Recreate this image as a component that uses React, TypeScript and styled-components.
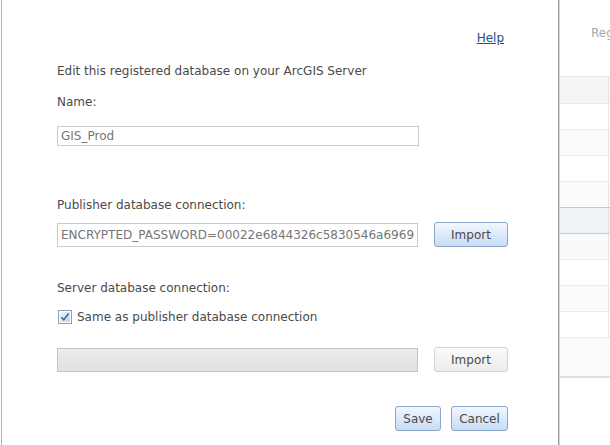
import React from 'react'
import styled, { createGlobalStyle } from 'styled-components'

const GlobalStyle = createGlobalStyle`
    html, body {
        margin: 0;
        padding: 0;
        background: #fff;
        font-family: "DejaVu Sans", Verdana, sans-serif;
        font-size: 12px;
        color: #4a4a4a;
    }
`

const Page = styled.div`
    display: flex;
    width: 610px;
    height: 445px;
    overflow: hidden;
`

const Dialog = styled.div`
    box-sizing: border-box;
    flex: 0 0 558px;
    margin-left: 1px;
    height: 445px;
    padding: 30px 50px 0 55px;
    background: #fff;
    border-left: 1px solid #b4b4b4;
    border-right: 1px solid #9c9c9c;
    box-shadow: 1px 0 0 #d6d6d6;
    display: flex;
    flex-direction: column;
    position: relative;
    z-index: 1;
`

const HelpRow = styled.div`
    display: flex;
    justify-content: flex-end;
    padding-right: 4px;
    line-height: 16px;
`

const HelpLink = styled.a`
    color: #1b4f8a;
    text-decoration: underline;
    cursor: pointer;
`

const Label = styled.div<{ $top: number }>`
    line-height: 16px;
    margin-top: ${p => p.$top}px;
    white-space: nowrap;
`

const TextBox = styled.input<{ $w: number; $h: number; $top?: number }>`
    box-sizing: border-box;
    width: ${p => p.$w}px;
    height: ${p => p.$h}px;
    margin: ${p => p.$top || 0}px 0 0 0;
    padding: 0 3px;
    border: 1px solid #c9c9c9;
    background: #fff;
    font-family: "DejaVu Sans", Verdana, sans-serif;
    font-size: 12px;
    color: #767676;
    outline: none;

    &:disabled {
        background: linear-gradient(#ececec, #e1e1e1);
        border-color: #c3c3c3;
    }
`

const FieldRow = styled.div<{ $top: number }>`
    display: flex;
    align-items: center;
    justify-content: space-between;
    height: 25px;
    margin-top: ${p => p.$top}px;
`

const Button = styled.button<{ $w: number; $plain?: boolean }>`
    box-sizing: border-box;
    width: ${p => p.$w}px;
    height: 25px;
    padding: 0;
    border-radius: 3px;
    border: 1px solid ${p => (p.$plain ? '#d2d2d2' : '#8aa6c8')};
    background: ${p =>
        p.$plain
            ? 'linear-gradient(#fbfbfb, #ececec)'
            : 'linear-gradient(#f1f7fe, #c8ddf4)'};
    font-family: "DejaVu Sans", Verdana, sans-serif;
    font-size: 12px;
    color: #4a4a4a;
    cursor: pointer;
`

const CheckRow = styled.label`
    display: flex;
    align-items: center;
    gap: 5px;
    height: 14px;
    margin-top: 14px;
    padding-left: 1px;
    line-height: 16px;
`

const Footer = styled.div`
    display: flex;
    justify-content: flex-end;
    gap: 10px;
    margin-top: 34px;
`

const Side = styled.div`
    flex: 1;
    display: flex;
    flex-direction: column;
    min-width: 0;
`

const SideTitle = styled.div`
    height: 76px;
    padding: 25px 0 0 32px;
    box-sizing: border-box;
    color: #a9a9a9;
    white-space: nowrap;
    line-height: 16px;
`

const GridRow = styled.div<{ $bg: string; $line: string; $h: number }>`
    display: flex;
    height: ${p => p.$h}px;
    background: ${p => p.$bg};
    border-bottom: 1px solid ${p => p.$line};
    box-sizing: border-box;
`

const GridCell = styled.div`
    width: 49px;
    border-right: 1px solid #ece6da;
    flex-shrink: 0;
`

const GridHeader = styled(GridRow)`
    border-top: 1px solid #e6e6e6;
`

const GridFoot = styled(GridRow)`
    border-bottom-width: 2px;
`

const Check = () => (
    <svg width="14" height="14" viewBox="0 0 14 14">
        <defs>
            <linearGradient id="cb" x1="0" y1="0" x2="1" y2="1">
                <stop offset="0" stopColor="#eef4fb" />
                <stop offset="1" stopColor="#c3d6ec" />
            </linearGradient>
        </defs>
        <rect x="0.5" y="0.5" width="13" height="13" fill="#fff" stroke="#8e9fb4" />
        <rect x="2" y="2" width="10" height="10" fill="url(#cb)" />
        <path d="M3.4 7.2 L5.8 9.8 L10.6 3.6" fill="none" stroke="#3b6aa3" strokeWidth="1.6" />
    </svg>
)

const rows = [
    { bg: '#fff', line: '#efe9de' },
    { bg: '#f9fbfd', line: '#efe9de' },
    { bg: '#fff', line: '#efe9de' },
    { bg: '#f9fbfd', line: '#b9cde3' },
    { bg: '#eef3f8', line: '#b9cde3' },
    { bg: '#f8fafc', line: '#efe9de' },
    { bg: '#fff', line: '#efe9de' },
    { bg: '#f9fbfd', line: '#efe9de' },
    { bg: '#fff', line: '#efe9de' },
]

const App = () => (
    <Page>
        <GlobalStyle />
        <Dialog>
            <HelpRow>
                <HelpLink>Help</HelpLink>
            </HelpRow>
            <Label $top={17}>Edit this registered database on your ArcGIS Server</Label>
            <Label $top={15}>Name:</Label>
            <TextBox $w={362} $h={20} $top={16} defaultValue="GIS_Prod" />
            <Label $top={51}>Publisher database connection:</Label>
            <FieldRow $top={9}>
                <TextBox $w={361} $h={24} defaultValue="ENCRYPTED_PASSWORD=00022e6844326c5830546a6969" />
                <Button $w={74}>Import</Button>
            </FieldRow>
            <Label $top={33}>Server database connection:</Label>
            <CheckRow>
                <Check />
                Same as publisher database connection
            </CheckRow>
            <FieldRow $top={23}>
                <TextBox $w={361} $h={24} disabled />
                <Button $w={74} $plain>Import</Button>
            </FieldRow>
            <Footer>
                <Button $w={46}>Save</Button>
                <Button $w={57}>Cancel</Button>
            </Footer>
        </Dialog>
        <Side>
            <SideTitle>Reg</SideTitle>
            <GridHeader $bg="#f5f5f5" $line="#efe9de" $h={28}>
                <GridCell />
            </GridHeader>
            {rows.map((r, i) => (
                <GridRow key={i} $bg={r.bg} $line={r.line} $h={26}>
                    <GridCell />
                </GridRow>
            ))}
            <GridFoot $bg="#fbfbfb" $line="#e0e0e0" $h={40} />
        </Side>
    </Page>
)

export default App
